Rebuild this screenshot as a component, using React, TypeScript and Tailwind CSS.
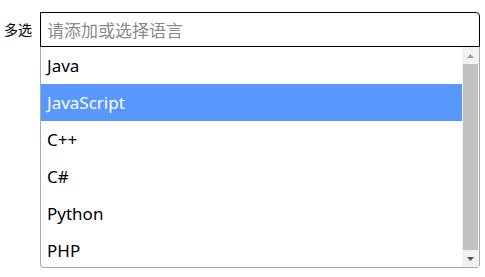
const languages = ["Java", "JavaScript", "C++", "C#", "Python", "PHP"];

export default function App() {
  return (
    <div className="w-[485px] h-[277px] bg-white flex items-start pt-[12px] pl-[4px] font-['Noto_Sans','Noto_Sans_CJK_SC',sans-serif]">
      <label className="w-[36px] h-[34px] flex items-center text-[14px] text-black font-['Noto_Sans_CJK_SC',sans-serif]">
        多选
      </label>
      <div className="w-[440px] flex flex-col">
        {/* search / tag input */}
        <div className="h-[35px] border border-black rounded-tr-[4px] flex items-center px-[6px]">
          <span className="text-[17px] text-[#8a8a8a] font-['Noto_Sans_CJK_SC',sans-serif] leading-none">
            请添加或选择语言
          </span>
        </div>
        {/* dropdown */}
        <div className="h-[221px] border border-t-0 border-[#aaaaaa] rounded-b-[4px] flex">
          <ul className="flex-1 flex flex-col">
            {languages.map((lang, i) => (
              <li
                key={lang}
                className={
                  "h-[37px] shrink-0 flex items-center px-[6px] text-[17px] " +
                  (i === 1 ? "bg-[#5897fb] text-white" : "text-black")
                }
              >
                {lang}
              </li>
            ))}
          </ul>
          {/* scrollbar */}
          <div className="w-[17px] flex flex-col items-center bg-[#f1f1f1]">
            <div className="h-[17px] w-full flex items-center justify-center">
              <svg width="7" height="4" viewBox="0 0 7 4"><path d="M0 4 L3.5 0 L7 4 Z" fill="#a3a3a3" /></svg>
            </div>
            <div className="flex-1 w-[15px] bg-[#c1c1c1]" />
            <div className="h-[17px] w-full flex items-center justify-center">
              <svg width="7" height="4" viewBox="0 0 7 4"><path d="M0 0 L7 0 L3.5 4 Z" fill="#505050" /></svg>
            </div>
          </div>
        </div>
      </div>
    </div>
  );
}
